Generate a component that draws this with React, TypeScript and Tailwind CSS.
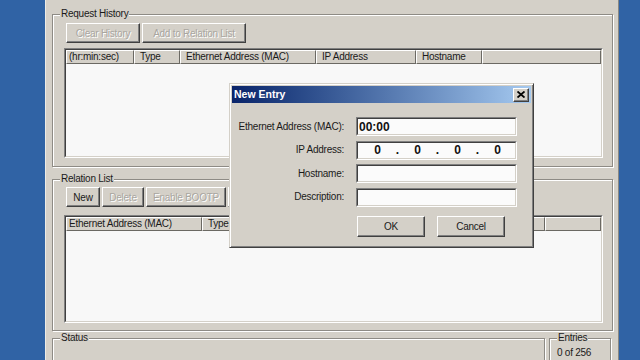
import React from "react";

const raised =
  "border border-t-white border-l-white border-r-[#404040] border-b-[#404040] shadow-[inset_-1px_-1px_0_#808080]";

function Btn({ children, disabled, className = "" }: { children?: React.ReactNode; disabled?: boolean; className?: string }) {
  return (
    <div
      className={`flex items-center justify-center bg-[#d4d0c8] ${raised} ${
        disabled ? "text-[#a9a6a0] [text-shadow:1px_1px_0_#ffffff]" : "text-[#1a1a1a]"
      } ${className}`}
    >
      {children}
    </div>
  );
}

function GroupBox({ title, className = "", children }: { title: string; className?: string; children?: React.ReactNode }) {
  return (
    <div className={`relative shrink-0 border border-[#8e8b85] shadow-[inset_1px_1px_0_#ffffff,1px_1px_0_#ffffff] ${className}`}>
      <span className="absolute left-[7px] -top-[7px] bg-[#d4d0c8] px-[1px] leading-[12px] text-[#1a1a1a]">{title}</span>
      {children}
    </div>
  );
}

function HeaderCell({ label, first, className = "" }: { label?: string; first?: boolean; className?: string }) {
  return (
    <div
      className={`h-[14px] shrink-0 border-t border-l border-t-white border-l-white border-r border-b border-r-[#6b6963] border-b-[#6b6963] leading-[12px] text-[#1a1a1a] whitespace-nowrap overflow-hidden ${
        first ? "pl-[2px]" : "pl-[5px]"
      } ${className}`}
    >
      {label}
    </div>
  );
}

function ListView({ cols, className = "" }: { cols: { label?: string; cls: string }[]; className?: string }) {
  return (
    <div className={`shrink-0 border border-t-[#808080] border-l-[#808080] border-b-white border-r-white ${className}`}>
      <div className="flex h-full flex-col border border-t-[#404040] border-l-[#404040] border-b-[#d4d0c8] border-r-[#d4d0c8] bg-[#f8f8f8]">
        <div className="flex bg-[#d4d0c8]">
          {cols.map((c, i) => (
            <HeaderCell key={i} first={i === 0} label={c.label} className={c.cls} />
          ))}
        </div>
        <div className="flex-1 bg-[#f8f8f8]" />
      </div>
    </div>
  );
}

function Field({ label, children }: { label: string; children?: React.ReactNode }) {
  return (
    <div className="flex items-center">
      <div className="w-[111px] text-right text-[#1a1a1a] leading-[12px]">{label}</div>
      <div className="ml-[12px] flex h-[19px] w-[161px] items-center border border-t-[#808080] border-l-[#808080] border-b-white border-r-white">
        <div className="flex h-full w-full items-center border border-t-[#404040] border-l-[#404040] border-b-[#d4d0c8] border-r-[#d4d0c8] bg-[#fbfbfb]">
          {children}
        </div>
      </div>
    </div>
  );
}

export default function App() {
  return (
    <div className="relative flex h-[360px] w-[640px] overflow-hidden bg-[#3063a5] font-['Liberation_Sans',Arial,sans-serif] text-[10px] tracking-[-0.25px]">
      <div className="w-[45px] shrink-0 bg-[#3063a5]" />
      <div className="flex w-[574px] shrink-0 flex-col border-l border-l-[#ecebe6] border-r border-r-[#8a8882] bg-[#d4d0c8] pl-[6px] pr-[5px] pt-[14px]">
        <GroupBox title="Request History" className="h-[153px] pl-[13px] pt-[8px]">
          <div className="flex gap-[2px]">
            <Btn disabled className="h-[20px] w-[74px]">Clear History</Btn>
            <Btn disabled className="h-[20px] w-[104px]">Add to Relation List</Btn>
          </div>
          <ListView
            className="ml-[-2px] mr-[9px] mt-[5px] h-[110px]"
            cols={[
              { label: "(hr:min:sec)", cls: "w-[68px]" },
              { label: "Type", cls: "w-[46px]" },
              { label: "Ethernet Address (MAC)", cls: "w-[136px]" },
              { label: "IP Address", cls: "w-[100px]" },
              { label: "Hostname", cls: "w-[66px]" },
              { cls: "flex-1" },
            ]}
          />
        </GroupBox>
        <GroupBox title="Relation List" className="mt-[12px] h-[152px] pl-[13px] pt-[7px]">
          <div className="flex gap-[2px]">
            <Btn className="h-[20px] w-[34px]">New</Btn>
            <Btn disabled className="h-[20px] w-[42px]">Delete</Btn>
            <Btn disabled className="h-[20px] w-[80px]">Enable BOOTP</Btn>
            <Btn disabled className="h-[20px] w-[82px]" />
          </div>
          <ListView
            className="ml-[-2px] mr-[9px] mt-[8px] h-[108px]"
            cols={[
              { label: "Ethernet Address (MAC)", cls: "w-[136px]" },
              { label: "Type", cls: "w-[66px]" },
              { cls: "w-[100px]" },
              { cls: "w-[177px]" },
              { cls: "flex-1" },
            ]}
          />
        </GroupBox>
        <div className="mt-[7px] flex shrink-0 gap-[4px]">
          <GroupBox title="Status" className="h-[40px] w-[493px]" />
          <GroupBox title="Entries" className="h-[40px] w-[62px]">
            <div className="pl-[7px] pt-[8px] leading-[12px] text-[#1a1a1a]">0 of 256</div>
          </GroupBox>
        </div>
      </div>
      <div className="flex-1 bg-[#3063a5]" />

      {/* New Entry dialog */}
      <div className="absolute left-[229px] top-[83px] flex h-[165px] w-[305px] flex-col border border-t-[#d4d0c8] border-l-[#d4d0c8] border-r-[#404040] border-b-[#404040] bg-[#d4d0c8] p-[2px] shadow-[inset_1px_1px_0_#ffffff,inset_-1px_-1px_0_#808080]">
        <div className="flex h-[17px] items-center bg-linear-to-r from-[#0a246a] to-[#a6caf0] pl-[2px] pr-[2px]">
          <span className="flex-1 text-[10.5px] font-bold tracking-normal text-white">New Entry</span>
          <div className={`flex h-[14px] w-[16px] items-center justify-center bg-[#d4d0c8] ${raised}`}>
            <svg width="8" height="7" viewBox="0 0 8 7">
              <path d="M0.5 0.5 L7.5 6.5 M7.5 0.5 L0.5 6.5" stroke="#000" strokeWidth="1.8" />
            </svg>
          </div>
        </div>
        <div className="flex flex-col gap-[4.5px] pt-[14px] pl-[1px]">
          <Field label="Ethernet Address (MAC):">
            <span className="pl-[1px] text-[12px] font-bold tracking-normal text-[#111]">00:00</span>
          </Field>
          <Field label="IP Address:">
            <div className="flex pl-[2px] text-[12px] font-bold tracking-normal text-[#111]">
              <span className="w-[35px] text-center">0</span>
              <span className="w-[5px] text-center">.</span>
              <span className="w-[35px] text-center">0</span>
              <span className="w-[5px] text-center">.</span>
              <span className="w-[35px] text-center">0</span>
              <span className="w-[5px] text-center">.</span>
              <span className="w-[35px] text-center">0</span>
            </div>
          </Field>
          <Field label="Hostname:" />
          <Field label="Description:" />
        </div>
        <div className="mt-[9px] flex gap-[12px] pl-[125px]">
          <Btn className="h-[21px] w-[68px]">OK</Btn>
          <Btn className="h-[21px] w-[68px]">Cancel</Btn>
        </div>
      </div>
    </div>
  );
}
